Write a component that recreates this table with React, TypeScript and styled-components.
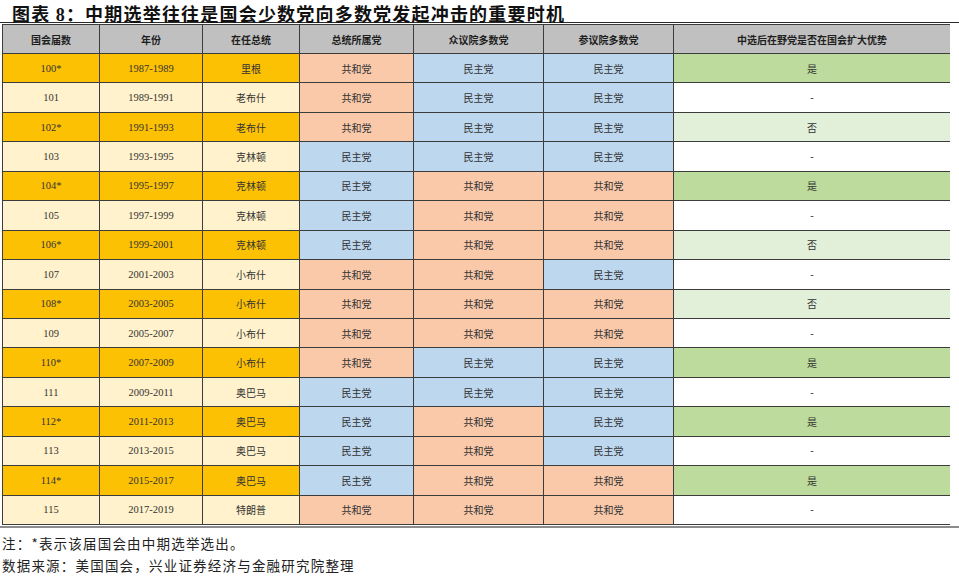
import React from "react";
import styled, { createGlobalStyle } from "styled-components";

type Party = "共和党" | "民主党";

type Row = {
  no: string;
  midterm: boolean;
  years: string;
  president: string;
  party: Party;
  house: Party;
  senate: Party;
  gain: "是" | "否" | "-";
};

const rows: Row[] = [
  { no: "100*", midterm: true, years: "1987-1989", president: "里根", party: "共和党", house: "民主党", senate: "民主党", gain: "是" },
  { no: "101", midterm: false, years: "1989-1991", president: "老布什", party: "共和党", house: "民主党", senate: "民主党", gain: "-" },
  { no: "102*", midterm: true, years: "1991-1993", president: "老布什", party: "共和党", house: "民主党", senate: "民主党", gain: "否" },
  { no: "103", midterm: false, years: "1993-1995", president: "克林顿", party: "民主党", house: "民主党", senate: "民主党", gain: "-" },
  { no: "104*", midterm: true, years: "1995-1997", president: "克林顿", party: "民主党", house: "共和党", senate: "共和党", gain: "是" },
  { no: "105", midterm: false, years: "1997-1999", president: "克林顿", party: "民主党", house: "共和党", senate: "共和党", gain: "-" },
  { no: "106*", midterm: true, years: "1999-2001", president: "克林顿", party: "民主党", house: "共和党", senate: "共和党", gain: "否" },
  { no: "107", midterm: false, years: "2001-2003", president: "小布什", party: "共和党", house: "共和党", senate: "民主党", gain: "-" },
  { no: "108*", midterm: true, years: "2003-2005", president: "小布什", party: "共和党", house: "共和党", senate: "共和党", gain: "否" },
  { no: "109", midterm: false, years: "2005-2007", president: "小布什", party: "共和党", house: "共和党", senate: "共和党", gain: "-" },
  { no: "110*", midterm: true, years: "2007-2009", president: "小布什", party: "共和党", house: "民主党", senate: "民主党", gain: "是" },
  { no: "111", midterm: false, years: "2009-2011", president: "奥巴马", party: "民主党", house: "民主党", senate: "民主党", gain: "-" },
  { no: "112*", midterm: true, years: "2011-2013", president: "奥巴马", party: "民主党", house: "共和党", senate: "民主党", gain: "是" },
  { no: "113", midterm: false, years: "2013-2015", president: "奥巴马", party: "民主党", house: "共和党", senate: "民主党", gain: "-" },
  { no: "114*", midterm: true, years: "2015-2017", president: "奥巴马", party: "民主党", house: "共和党", senate: "共和党", gain: "是" },
  { no: "115", midterm: false, years: "2017-2019", president: "特朗普", party: "共和党", house: "共和党", senate: "共和党", gain: "-" },
];

const headers = ["国会届数", "年份", "在任总统", "总统所属党", "众议院多数党", "参议院多数党", "中选后在野党是否在国会扩大优势"];

const partyBg: Record<Party, string> = {
  共和党: "#f9c9aa",
  民主党: "#bdd7ee",
};

const gainBg: Record<Row["gain"], string> = {
  是: "#bcdb9c",
  否: "#e2f0d9",
  "-": "#ffffff",
};

const GlobalStyle = createGlobalStyle`
  html, body {
    margin: 0;
    padding: 0;
    background: #ffffff;
  }
  body {
    font-family: "Liberation Serif", "Noto Sans CJK SC", serif;
  }
`;

const Page = styled.div`
  width: 959px;
  height: 576px;
  display: flex;
  flex-direction: column;
  overflow: hidden;
`;

const Title = styled.h1`
  margin: 0;
  padding: 0 0 0 12px;
  height: 22px;
  border-bottom: 1px solid #2a2a2a;
  font-family: "Noto Sans CJK SC", sans-serif;
  font-weight: 700;
  font-size: 18px;
  line-height: 26px;
  letter-spacing: 1.2px;
  color: #111;
  white-space: nowrap;
`;

const Num = styled.span`
  font-family: "Liberation Serif", serif;
`;

const Table = styled.div`
  margin: 1px 0 0 2px;
  width: 948px;
  height: 506px;
  display: grid;
  grid-template-columns: 96px 102px 96px 113px 129px 129px 276px;
  grid-template-rows: 28px repeat(16, 1fr);
  gap: 1px;
  padding: 1px;
  box-sizing: border-box;
  background: #3c3c3c;
`;

const HeadCell = styled.div`
  display: flex;
  align-items: center;
  justify-content: center;
  background: #c0c0c0;
  font-family: "Noto Sans CJK SC", sans-serif;
  font-weight: 700;
  font-size: 10px;
  color: #1e1e1e;
`;

const Cell = styled.div<{ $bg: string; $cjk?: boolean }>`
  display: flex;
  align-items: center;
  justify-content: center;
  background: ${({ $bg }) => $bg};
  font-family: ${({ $cjk }) =>
    $cjk ? `"Noto Sans CJK SC", sans-serif` : `"Liberation Serif", serif`};
  font-size: ${({ $cjk }) => ($cjk ? "10px" : "10.5px")};
  color: #333;
`;

const Rule = styled.div`
  margin-top: 1px;
  height: 2px;
  background: #8c8c8c;
`;

const Notes = styled.div`
  padding: 4px 0 0 2px;
  font-family: "Noto Sans CJK SC", sans-serif;
  font-size: 13.5px;
  line-height: 22px;
  letter-spacing: 1.2px;
  color: #222;
`;

const App: React.FC = () => {
  return (
    <Page>
      <GlobalStyle />
      <Title>
        图表 <Num>8</Num>：中期选举往往是国会少数党向多数党发起冲击的重要时机
      </Title>
      <Table>
        {headers.map((h) => (
          <HeadCell key={h}>{h}</HeadCell>
        ))}
        {rows.map((r) => {
          const base = r.midterm ? "#fdc104" : "#fff2cc";
          return (
            <React.Fragment key={r.no}>
              <Cell $bg={base}>{r.no}</Cell>
              <Cell $bg={base}>{r.years}</Cell>
              <Cell $bg={base} $cjk>{r.president}</Cell>
              <Cell $bg={partyBg[r.party]} $cjk>{r.party}</Cell>
              <Cell $bg={partyBg[r.house]} $cjk>{r.house}</Cell>
              <Cell $bg={partyBg[r.senate]} $cjk>{r.senate}</Cell>
              <Cell $bg={gainBg[r.gain]} $cjk={r.gain !== "-"}>{r.gain}</Cell>
            </React.Fragment>
          );
        })}
      </Table>
      <Rule />
      <Notes>
        <div>注：*表示该届国会由中期选举选出。</div>
        <div>数据来源：美国国会，兴业证券经济与金融研究院整理</div>
      </Notes>
    </Page>
  );
};

export default App;
